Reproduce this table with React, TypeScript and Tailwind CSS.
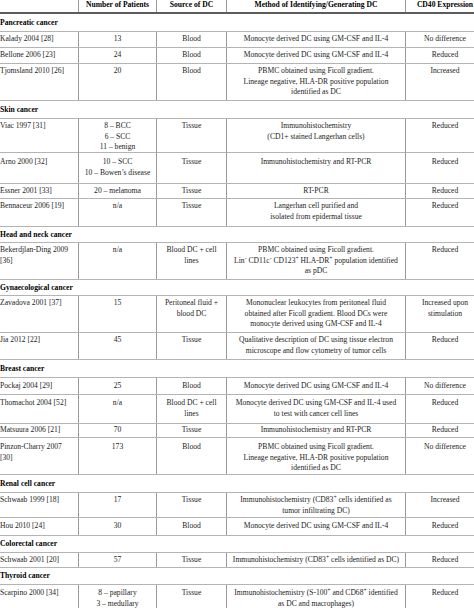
import React from 'react';

type Cells = [React.ReactNode, React.ReactNode, React.ReactNode, React.ReactNode, React.ReactNode];

type Row =
  | { kind: 'section'; title: string; h: string }
  | { kind: 'data'; h: string; pt: string; cells: Cells };

const Sup = ({ children }: { children: React.ReactNode }) => <sup>{children}</sup>;

const PBMC = (
  <>
    PBMC obtained using Ficoll gradient.
    <br />
    Lineage negative, HLA-DR positive population
    <br />
    identified as DC
  </>
);

const ROWS: Row[] = [
  { kind: 'section', title: 'Pancreatic cancer', h: 'h-[18px]' },
  { kind: 'data', h: 'h-[16px]', pt: 'pt-[2px]', cells: ['Kalady 2004 [28]', '13', 'Blood', 'Monocyte derived DC using GM-CSF and IL-4', 'No difference'] },
  { kind: 'data', h: 'h-[16px]', pt: 'pt-[2px]', cells: ['Bellone 2006 [23]', '24', 'Blood', 'Monocyte derived DC using GM-CSF and IL-4', 'Reduced'] },
  { kind: 'data', h: 'h-[37px]', pt: 'pt-[2px]', cells: ['Tjomsland 2010 [26]', '20', 'Blood', PBMC, 'Increased'] },
  { kind: 'section', title: 'Skin cancer', h: 'h-[18px]' },
  {
    kind: 'data',
    h: 'h-[34px]',
    pt: 'pt-[2px]',
    cells: [
      'Viac 1997 [31]',
      <>8 – BCC<br />6 – SCC<br />11 – benign</>,
      'Tissue',
      <>Immunohistochemistry<br />(CD1+ stained Langerhan cells)</>,
      'Reduced',
    ],
  },
  {
    kind: 'data',
    h: 'h-[31px]',
    pt: 'pt-[4px]',
    cells: ['Arno 2000 [32]', <>10 – SCC<br />10 – Bowen’s disease</>, 'Tissue', 'Immunohistochemistry and RT-PCR', 'Reduced'],
  },
  { kind: 'data', h: 'h-[15px]', pt: 'pt-[2px]', cells: ['Essner 2001 [33]', '20 – melanoma', 'Tissue', 'RT-PCR', 'Reduced'] },
  {
    kind: 'data',
    h: 'h-[28px]',
    pt: 'pt-[2px]',
    cells: ['Bennaceur 2006 [19]', 'n/a', 'Tissue', <>Langerhan cell purified and<br />isolated from epidermal tissue</>, 'Reduced'],
  },
  { kind: 'section', title: 'Head and neck cancer', h: 'h-[16px]' },
  {
    kind: 'data',
    h: 'h-[37px]',
    pt: 'pt-[2px]',
    cells: [
      <>Bekerdjlan-Ding 2009<br />[36]</>,
      'n/a',
      <>Blood DC + cell<br />lines</>,
      <>
        PBMC obtained using Ficoll gradient.
        <br />
        Lin<Sup>-</Sup> CD11c<Sup>-</Sup> CD123<Sup>+</Sup> HLA-DR<Sup>+</Sup> population identified
        <br />
        as pDC
      </>,
      'Reduced',
    ],
  },
  { kind: 'section', title: 'Gynaecological cancer', h: 'h-[16px]' },
  {
    kind: 'data',
    h: 'h-[37px]',
    pt: 'pt-[2px]',
    cells: [
      'Zavadova 2001 [37]',
      '15',
      <>Peritoneal fluid +<br />blood DC</>,
      <>
        Mononuclear leukocytes from peritoneal fluid
        <br />
        obtained after Ficoll gradient. Blood DCs were
        <br />
        monocyte derived using GM-CSF and IL-4
      </>,
      <>Increased upon<br />stimulation</>,
    ],
  },
  {
    kind: 'data',
    h: 'h-[27px]',
    pt: 'pt-[2px]',
    cells: [
      'Jia 2012 [22]',
      '45',
      'Tissue',
      <>Qualitative description of DC using tissue electron<br />microscope and flow cytometry of tumor cells</>,
      'Reduced',
    ],
  },
  { kind: 'section', title: 'Breast cancer', h: 'h-[18px]' },
  { kind: 'data', h: 'h-[17px]', pt: 'pt-[3px]', cells: ['Pockaj 2004 [29]', '25', 'Blood', 'Monocyte derived DC using GM-CSF and IL-4', 'No difference'] },
  {
    kind: 'data',
    h: 'h-[29px]',
    pt: 'pt-[3px]',
    cells: [
      'Thomachot 2004 [52]',
      'n/a',
      <>Blood DC + cell<br />lines</>,
      <>Monocyte derived DC using GM-CSF and IL-4 used<br />to test with cancer cell lines</>,
      'Reduced',
    ],
  },
  { kind: 'data', h: 'h-[14px]', pt: 'pt-[1px]', cells: ['Matsuura 2006 [21]', '70', 'Tissue', 'Immunohistochemistry and RT-PCR', 'Reduced'] },
  { kind: 'data', h: 'h-[37px]', pt: 'pt-[4px]', cells: [<>Pinzon-Charry 2007<br />[30]</>, '173', 'Blood', PBMC, 'No difference'] },
  { kind: 'section', title: 'Renal cell cancer', h: 'h-[18px]' },
  {
    kind: 'data',
    h: 'h-[25px]',
    pt: 'pt-[2px]',
    cells: [
      'Schwaab 1999 [18]',
      '17',
      'Tissue',
      <>Immunohistochemistry (CD83<Sup>+</Sup> cells identified as<br />tumor infiltrating DC)</>,
      'Increased',
    ],
  },
  { kind: 'data', h: 'h-[18px]', pt: 'pt-[3px]', cells: ['Hou 2010 [24]', '30', 'Blood', 'Monocyte derived DC using GM-CSF and IL-4', 'Reduced'] },
  { kind: 'section', title: 'Colorectal cancer', h: 'h-[17px]' },
  {
    kind: 'data',
    h: 'h-[15px]',
    pt: 'pt-[2px]',
    cells: ['Schwaab 2001 [20]', '57', 'Tissue', <>Immunohistochemistry (CD83<Sup>+</Sup> cells identified as DC)</>, 'Reduced'],
  },
  { kind: 'section', title: 'Thyroid cancer', h: 'h-[17px]' },
  {
    kind: 'data',
    h: 'h-[34px]',
    pt: 'pt-[3px]',
    cells: [
      'Scarpino 2000 [34]',
      <>8 – papillary<br />3 – medullary</>,
      'Tissue',
      <>Immunohistochemistry (S-100<Sup>+</Sup> and CD68<Sup>+</Sup> identified<br />as DC and macrophages)</>,
      'Reduced',
    ],
  },
];

const GRID = 'grid grid-cols-[79px_78px_70px_179px_78px] w-[484px]';
const HEADERS = ['', 'Number of Patients', 'Source of DC', 'Method of Identifying/Generating DC', 'CD40 Expression'];

export default function App() {
  return (
    <div
      className="w-[474px] h-[608px] overflow-hidden bg-white text-[#1c1c1c] text-[7.6px] leading-[10.5px]"
      style={{ fontFamily: '"Liberation Serif", "Times New Roman", serif' }}
    >
      {/* Header */}
      <div className={`${GRID} h-[14px] border-b-2 border-[#5c5c5c]`}>
        {HEADERS.map((h, i) => (
          <div
            key={i}
            className={`font-bold text-black text-center whitespace-nowrap ${i < 4 ? 'border-r border-[#9a9a9a]' : ''}`}
          >
            {h}
          </div>
        ))}
      </div>

      {ROWS.map((row, r) =>
        row.kind === 'section' ? (
          <div
            key={r}
            className={`${row.h} w-[484px] flex items-center pt-[1px] border-b border-[#b4b4b4] font-bold text-black`}
          >
            {row.title}
          </div>
        ) : (
          <div key={r} className={`${GRID} ${row.h} border-b border-[#b4b4b4]`}>
            {row.cells.map((c, i) => (
              <div
                key={i}
                className={`${row.pt} whitespace-nowrap ${i === 0 ? 'text-left' : 'text-center'} ${
                  i < 4 ? 'border-r border-[#9a9a9a]' : ''
                }`}
              >
                {c}
              </div>
            ))}
          </div>
        )
      )}
    </div>
  );
}
